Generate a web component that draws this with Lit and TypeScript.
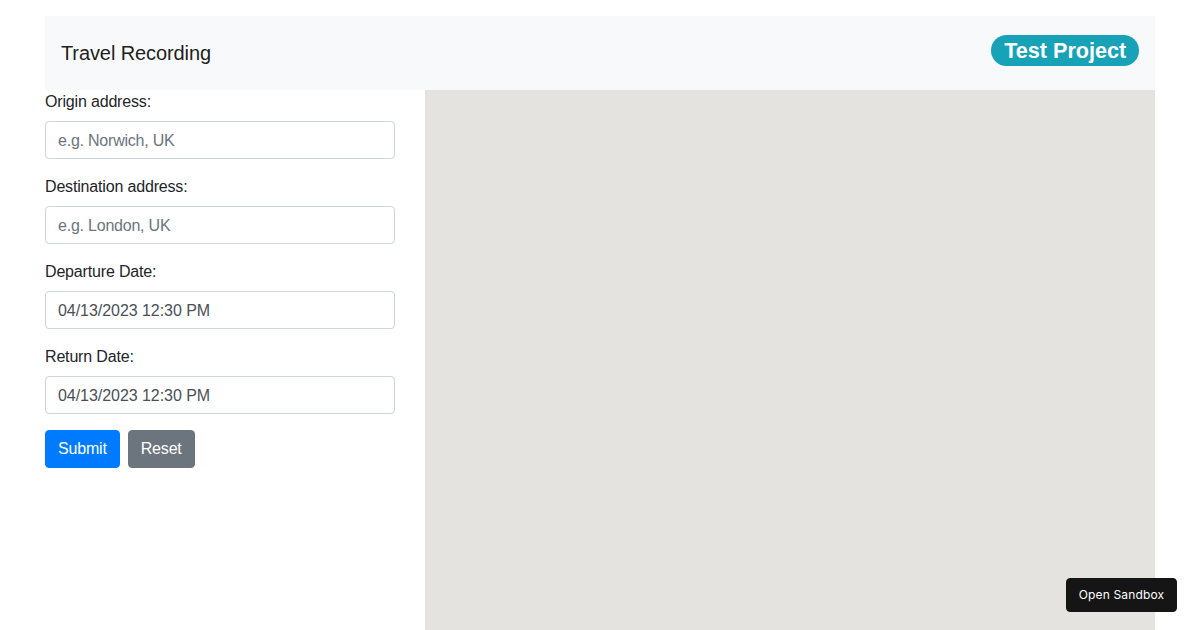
import { LitElement, html, css } from "lit";
import { customElement } from "lit/decorators.js";

const fields = [
  { label: "Origin address:", placeholder: "e.g. Norwich, UK", value: "" },
  { label: "Destination address:", placeholder: "e.g. London, UK", value: "" },
  { label: "Departure Date:", placeholder: "", value: "04/13/2023 12:30 PM" },
  { label: "Return Date:", placeholder: "", value: "04/13/2023 12:30 PM" },
];

@customElement("app-root")
export class AppRoot extends LitElement {
  static styles = css`
    :host {
      display: block;
      font-family: "Liberation Sans", Arial, sans-serif;
      font-size: 16px;
      line-height: 1.5;
      color: #212529;
      height: 630px;
      overflow: hidden;
      position: relative;
      background: #fff;
    }
    * { box-sizing: border-box; }
    .container {
      width: 1110px;
      margin: 0 auto;
      padding-top: 16px;
      height: 100%;
      display: flex;
      flex-direction: column;
    }
    .navbar {
      height: 74px;
      flex: none;
      background: #f8f9fa;
      padding: 0 16px;
      display: flex;
      align-items: center;
      justify-content: space-between;
    }
    .brand {
      font-size: 20px;
      line-height: 30px;
      letter-spacing: -0.1px;
      color: rgba(0, 0, 0, 0.9);
    }
    .badge {
      font-size: 21.6px;
      font-weight: 700;
      line-height: 21px;
      color: #fff;
      background: #17a2b8;
      padding: 4.75px 12.8px 5.75px;
      border-radius: 10rem;
      margin-top: -5px;
    }
    .row {
      flex: 1;
      display: flex;
      min-height: 0;
    }
    .side {
      width: 380px;
      flex: none;
      padding-right: 30px;
    }
    .map {
      flex: 1;
      background: #e5e3df;
    }
    .group { margin-bottom: 16px; }
    label {
      display: block;
      margin-bottom: 8px;
      height: 23px;
      letter-spacing: -0.17px;
    }
    input {
      display: block;
      width: 100%;
      height: 38px;
      padding: 7px 12px 5px;
      font: inherit;
      letter-spacing: -0.05px;
      color: #495057;
      background: #fff;
      border: 1px solid #ced4da;
      border-radius: 4px;
      outline: none;
    }
    input::placeholder { color: #6c757d; opacity: 1; letter-spacing: -0.22px; }
    .actions {
      display: flex;
      gap: 8px;
    }
    button {
      height: 38px;
      padding: 6px 12px;
      font: inherit;
      letter-spacing: -0.18px;
      color: #fff;
      border: 1px solid transparent;
      border-radius: 4px;
    }
    .primary { background: #007bff; border-color: #007bff; }
    .secondary { background: #6c757d; border-color: #6c757d; }
    .sandbox {
      position: absolute;
      right: 23px;
      bottom: 18px;
      width: 111px;
      height: 34px;
      padding: 0;
      display: flex;
      align-items: center;
      justify-content: center;
      font-family: Inter, sans-serif;
      font-size: 12px;
      letter-spacing: 0.15px;
      color: #fff;
      background: #151515;
      border: 1px solid #151515;
      border-radius: 4px;
    }
  `;

  render() {
    return html`
      <div class="container">
        <nav class="navbar">
          <span class="brand">Travel Recording</span>
          <span class="badge">Test Project</span>
        </nav>
        <div class="row">
          <form class="side">
            ${fields.map(
              (f) => html`
                <div class="group">
                  <label>${f.label}</label>
                  <input type="text" placeholder=${f.placeholder} .value=${f.value} />
                </div>
              `
            )}
            <div class="actions">
              <button type="button" class="primary">Submit</button>
              <button type="button" class="secondary">Reset</button>
            </div>
          </form>
          <div class="map"></div>
        </div>
      </div>
      <button class="sandbox" type="button">Open Sandbox</button>
    `;
  }
}
